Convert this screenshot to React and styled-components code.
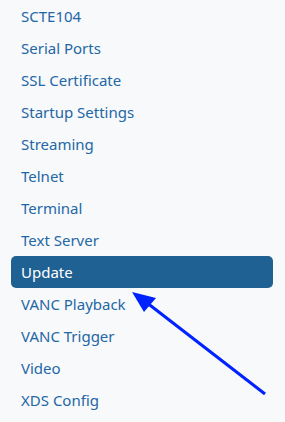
import React from 'react';
import styled, { createGlobalStyle } from 'styled-components';

const GlobalStyle = createGlobalStyle`
  html, body {
    margin: 0;
    padding: 0;
    background: #f8f9fa;
  }
  body {
    font-family: "Noto Sans", "Open Sans", sans-serif;
  }
`;

const Wrapper = styled.div`
  position: relative;
  width: 285px;
  height: 422px;
  overflow: hidden;
  background: #f8f9fa;
`;

const NavList = styled.ul`
  list-style: none;
  margin: 0;
  padding: 0 12px 0 11px;
  display: flex;
  flex-direction: column;
`;

const NavItem = styled.li`
  height: 32px;
  display: flex;
  align-items: center;
  padding-left: 10px;
  border-radius: 5px;
  font-size: 15px;
  color: ${({ $active }) => ($active ? '#ffffff' : '#2367a6')};
  background: ${({ $active }) => ($active ? '#1f6193' : 'transparent')};
  cursor: pointer;
`;

const ArrowLayer = styled.svg`
  position: absolute;
  left: 0;
  top: 0;
  pointer-events: none;
`;

const items = [
  'SCTE104',
  'Serial Ports',
  'SSL Certificate',
  'Startup Settings',
  'Streaming',
  'Telnet',
  'Terminal',
  'Text Server',
  'Update',
  'VANC Playback',
  'VANC Trigger',
  'Video',
  'XDS Config',
];

const App = () => (
  <Wrapper>
    <GlobalStyle />
    <NavList>
      {items.map((name) => (
        <NavItem key={name} $active={name === 'Update'}>
          {name}
        </NavItem>
      ))}
    </NavList>
    <ArrowLayer width="285" height="422" viewBox="0 0 285 422">
      <line x1="265" y1="394" x2="142" y2="299" stroke="#0022ff" strokeWidth="3" />
      <polygon points="132,292 156,298 144,312" fill="#0022ff" />
    </ArrowLayer>
  </Wrapper>
);

export default App;
